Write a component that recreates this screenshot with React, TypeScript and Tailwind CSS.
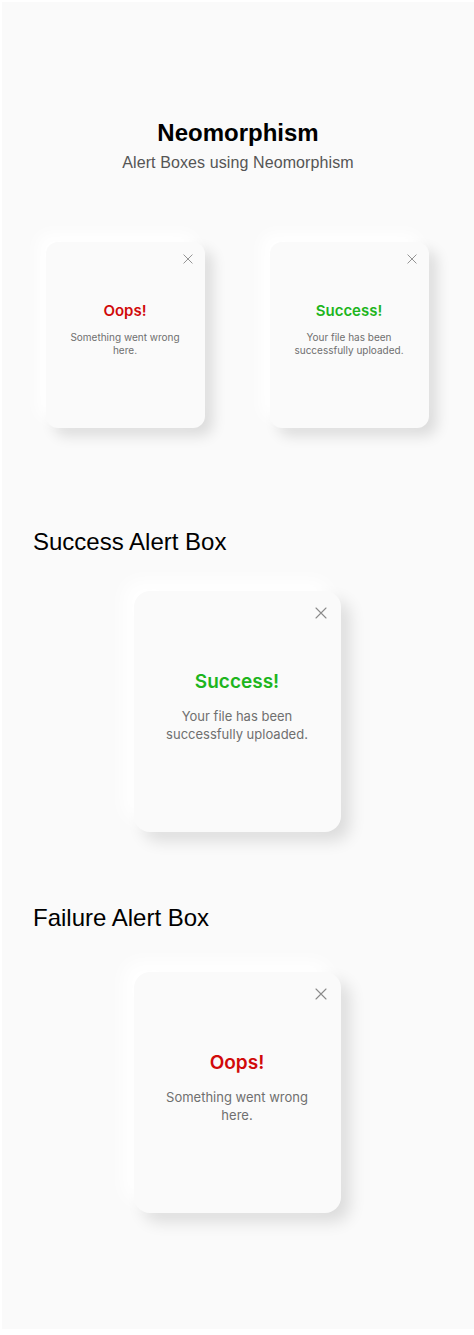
import React from "react";

type Alert = {
  title: string;
  color: string;
  lines: string[];
};

const failure: Alert = {
  title: "Oops!",
  color: "text-[#d10a0a]",
  lines: ["Something went wrong", "here."],
};

const success: Alert = {
  title: "Success!",
  color: "text-[#1db51d]",
  lines: ["Your file has been", "successfully uploaded."],
};

const CloseIcon = ({ size }: { size: number }) => (
  <svg width={size} height={size} viewBox="0 0 12 12" fill="none">
    <path d="M1 1L11 11M11 1L1 11" stroke="#8a8a8a" strokeWidth="1.1" strokeLinecap="round" />
  </svg>
);

const SmallCard = ({ alert }: { alert: Alert }) => (
  <div className="relative w-[159px] h-[186px] rounded-[12px] bg-[#fafafa] shadow-[-9px_-9px_16px_#ffffff,8px_8px_14px_rgba(0,0,0,0.12)] flex flex-col items-center pt-[59px] text-center font-['Inter',sans-serif]">
    <div className="absolute top-[12px] right-[12px]">
      <CloseIcon size={10} />
    </div>
    <div className={`text-[15px] leading-[20px] font-semibold ${alert.color}`}>{alert.title}</div>
    <p className="mt-[10px] text-[10px] leading-[13px] text-[#6f6f6f]">
      {alert.lines[0]}
      <br />
      {alert.lines[1]}
    </p>
  </div>
);

const LargeCard = ({ alert }: { alert: Alert }) => (
  <div className="relative w-[207px] h-[241px] rounded-[16px] bg-[#fafafa] shadow-[-11px_-11px_18px_#ffffff,9px_9px_16px_rgba(0,0,0,0.12)] flex flex-col items-center pt-[79px] text-center font-['Inter',sans-serif]">
    <div className="absolute top-[16px] right-[14px]">
      <CloseIcon size={12} />
    </div>
    <div className={`text-[19px] leading-[24px] font-semibold ${alert.color}`}>{alert.title}</div>
    <p className="mt-[13px] text-[13px] leading-[18px] text-[#6f6f6f]">
      {alert.lines[0]}
      <br />
      {alert.lines[1]}
    </p>
  </div>
);

export default function App() {
  return (
    <div className="bg-white w-[474px] pl-[2px] pt-[2px] pb-[6px]">
      <div className="bg-[#fafafa] h-[1327px] flex flex-col font-['Liberation_Sans',sans-serif]">
        <h1 className="pt-[117px] text-center text-[24px] leading-[28px] font-bold text-black">Neomorphism</h1>
        <p className="mt-[5px] text-center text-[16px] leading-[22px] tracking-[0.1px] text-[#555555]">Alert Boxes using Neomorphism</p>

        <div className="mt-[68px] flex justify-center gap-[65px] pr-[2px]">
          <SmallCard alert={failure} />
          <SmallCard alert={success} />
        </div>

        <h2 className="mt-[100px] pl-[31px] text-[24px] leading-[28px] text-black">Success Alert Box</h2>
        <div className="mt-[35px] flex justify-center pr-[2px]">
          <LargeCard alert={success} />
        </div>

        <h2 className="mt-[72px] pl-[31px] text-[24px] leading-[28px] text-black">Failure Alert Box</h2>
        <div className="mt-[40px] flex justify-center pr-[2px]">
          <LargeCard alert={failure} />
        </div>
      </div>
    </div>
  );
}
